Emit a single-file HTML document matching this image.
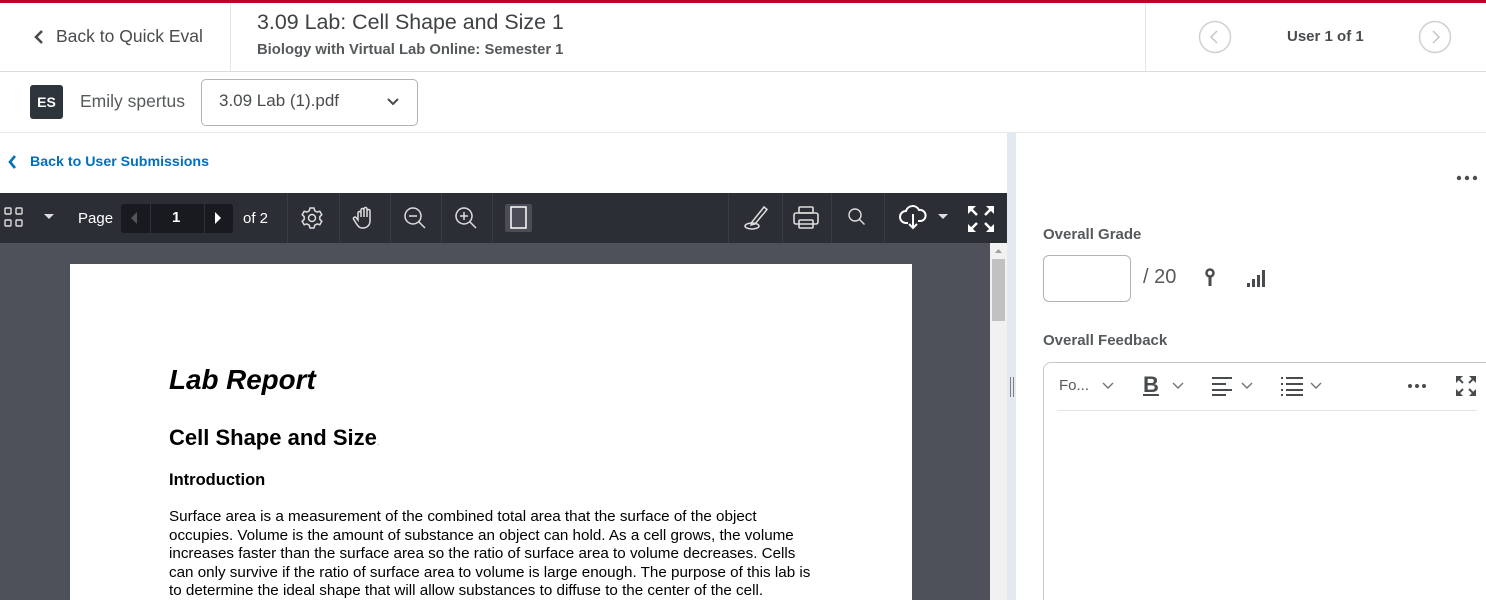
<!DOCTYPE html>
<html style="overflow:hidden;height:600px"><head><meta charset="utf-8"><style>
*{box-sizing:border-box;margin:0;padding:0}
body{width:1486px;height:600px;overflow:hidden;background:#fff;font-family:"Liberation Sans",sans-serif;color:#494c4e;position:relative}
.a{position:absolute}
svg{position:absolute;overflow:visible}
.pdf p{position:absolute;left:168px;font-family:"Liberation Sans",sans-serif;color:#000}
</style></head><body>
<div class="a" style="left:0;top:0;width:1486px;height:3px;background:#c1002a"></div>
<div class="a" style="left:0;top:71px;width:1486px;height:1px;background:#dcdcdc"></div>
<div class="a" style="left:230px;top:3px;width:1px;height:68px;background:#e6e6e6"></div>
<div class="a" style="left:1145px;top:3px;width:1px;height:68px;background:#e6e6e6"></div>
<svg style="left:33px;top:29px" width="12" height="16"><path d="M9 2L3 8L9 14" stroke="#494c4e" stroke-width="2.6" fill="none"/></svg>
<div class="a" style="left:56px;top:26px;font-size:17.5px">Back to Quick Eval</div>
<div class="a" style="left:257px;top:10px;font-size:21.4px;color:#3f4244">3.09 Lab: Cell Shape and Size 1</div>
<div class="a" style="left:257px;top:42px;font-size:14.8px;font-weight:bold;color:#565a5c">Biology with Virtual Lab Online: Semester 1</div>
<svg style="left:1199px;top:21px" width="32" height="32"><circle cx="16" cy="16" r="15.5" stroke="#cfd1d3" stroke-width="1.5" fill="none"/><path d="M18 10L12 16L18 22" stroke="#c3c5c7" stroke-width="1.5" fill="none"/></svg>
<svg style="left:1419px;top:21px" width="32" height="32"><circle cx="16" cy="16" r="15.5" stroke="#cfd1d3" stroke-width="1.5" fill="none"/><path d="M14 10L20 16L14 22" stroke="#c3c5c7" stroke-width="1.5" fill="none"/></svg>
<div class="a" style="left:1287px;top:28px;font-size:15px;font-weight:bold;color:#494c4e">User 1 of 1</div>

<div class="a" style="left:30px;top:85px;width:33px;height:34px;background:#2e343b;border-radius:3px;color:#fff;font-size:14px;font-weight:bold;text-align:center;line-height:34px">ES</div>
<div class="a" style="left:80px;top:91px;font-size:17.5px;color:#565a5c">Emily spertus</div>
<div class="a" style="left:201px;top:79px;width:217px;height:47px;border:1px solid #b3b3b3;border-radius:5px"></div>
<div class="a" style="left:219px;top:91px;font-size:17px;color:#494c4e">3.09 Lab (1).pdf</div>
<svg style="left:387px;top:98px" width="12" height="8"><path d="M1 1L6 6L11 1" stroke="#494c4e" stroke-width="2" fill="none"/></svg>
<div class="a" style="left:0;top:132px;width:1486px;height:1px;background:#e8e8e8"></div>

<svg style="left:7px;top:154px" width="10" height="16"><path d="M8 2L3 8L8 14" stroke="#006fbf" stroke-width="2.6" fill="none"/></svg>
<div class="a" style="left:30px;top:154px;font-size:14.2px;font-weight:bold;color:#006fbf">Back to User Submissions</div>

<div class="a" style="left:1007px;top:133px;width:9px;height:467px;background:#e3e9f0"></div>
<div class="a" style="left:1010px;top:377px;width:1px;height:20px;background:#7b7f84"></div>
<div class="a" style="left:1013px;top:377px;width:1px;height:20px;background:#7b7f84"></div>

<div class="a" style="left:0;top:193px;width:1007px;height:50px;background:#2b2e35"></div>
<div class="a" style="left:0;top:243px;width:990px;height:357px;background:#4e515a"></div>
<div class="a" style="left:990px;top:243px;width:17px;height:357px;background:#f1f1f1"></div>
<div class="a" style="left:992px;top:259px;width:13px;height:62px;background:#c1c1c1"></div>
<svg style="left:994px;top:248px" width="9" height="6"><path d="M1 5L4.5 1L8 5Z" fill="#a0a0a0"/></svg>

<svg style="left:4px;top:207px" width="22" height="22"><g fill="none" stroke="#ddd" stroke-width="1.4"><rect x="1" y="1" width="6" height="6" rx="1"/><rect x="12" y="1" width="6" height="6" rx="1"/><rect x="1" y="13" width="6" height="6" rx="1"/><rect x="12" y="13" width="6" height="6" rx="1"/></g></svg>
<svg style="left:44px;top:214px" width="10" height="6"><path d="M0 0H10L5 5Z" fill="#ddd"/></svg>
<div class="a" style="left:78px;top:210px;font-size:15px;color:#fff">Page</div>
<div class="a" style="left:121px;top:204px;width:112px;height:29px;background:#181a1f;border-radius:3px"></div>
<div class="a" style="left:150px;top:204px;width:1px;height:29px;background:#2e3138"></div>
<div class="a" style="left:204px;top:204px;width:1px;height:29px;background:#2e3138"></div>
<svg style="left:131px;top:212px" width="6" height="12"><path d="M6 0V12L0 6Z" fill="#555"/></svg>
<svg style="left:215px;top:212px" width="6" height="12"><path d="M0 0V12L6 6Z" fill="#fff"/></svg>
<div class="a" style="left:172px;top:209px;font-size:15px;color:#fff;font-weight:bold">1</div>
<div class="a" style="left:243px;top:210px;font-size:15px;color:#fff">of 2</div>
<div class="a" style="left:287px;top:193px;width:1px;height:50px;background:#3a3d45"></div>
<div class="a" style="left:339px;top:193px;width:1px;height:50px;background:#3a3d45"></div>
<div class="a" style="left:390px;top:193px;width:1px;height:50px;background:#3a3d45"></div>
<div class="a" style="left:441px;top:193px;width:1px;height:50px;background:#3a3d45"></div>
<div class="a" style="left:492px;top:193px;width:1px;height:50px;background:#3a3d45"></div>
<div class="a" style="left:728px;top:193px;width:1px;height:50px;background:#3a3d45"></div>
<div class="a" style="left:782px;top:193px;width:1px;height:50px;background:#3a3d45"></div>
<div class="a" style="left:831px;top:193px;width:1px;height:50px;background:#3a3d45"></div>
<div class="a" style="left:884px;top:193px;width:1px;height:50px;background:#3a3d45"></div>
<svg style="left:300px;top:206px" width="24" height="24"><g fill="none" stroke="#ddd" stroke-width="1.5"><circle cx="12" cy="12" r="3.5"/><path d="M10 2h4l.7 2.7 2.4 1.4 2.7-.8 2 3.4-2 2v2.6l2 2-2 3.4-2.7-.8-2.4 1.4L14 22h-4l-.7-2.7-2.4-1.4-2.7.8-2-3.4 2-2v-2.6l-2-2 2-3.4 2.7.8 2.4-1.4z"/></g></svg>
<svg style="left:351px;top:205px" width="26" height="26"><path d="M7 15V8a1.5 1.5 0 0 1 3 0v4V5a1.5 1.5 0 0 1 3 0v7V4a1.5 1.5 0 0 1 3 0v8V6a1.5 1.5 0 0 1 3 0v10c0 4-3 7-7 7h-1c-3 0-4-2-6-5l-2.5-4a1.5 1.5 0 0 1 2.5-1.5z" fill="none" stroke="#ddd" stroke-width="1.5"/></svg>
<svg style="left:403px;top:206px" width="24" height="24"><g fill="none" stroke="#ddd" stroke-width="1.5"><circle cx="10" cy="10" r="8"/><path d="M16 16l6 6M6 10h8"/></g></svg>
<svg style="left:454px;top:206px" width="24" height="24"><g fill="none" stroke="#ddd" stroke-width="1.5"><circle cx="10" cy="10" r="8"/><path d="M16 16l6 6M6 10h8M10 6v8"/></g></svg>
<div class="a" style="left:505px;top:204px;width:27px;height:28px;background:#4a4d55;border-radius:2px"></div>
<svg style="left:510px;top:206px" width="18" height="24"><rect x="1" y="1" width="15" height="21" fill="none" stroke="#fff" stroke-width="1.5"/></svg>
<svg style="left:743px;top:203px" width="26" height="28"><g fill="none" stroke="#ddd" stroke-width="1.5"><path d="M9 19L21 4l3 2.5L12 21l-4 1z"/><ellipse cx="9" cy="23" rx="7" ry="3"/></g></svg>
<svg style="left:793px;top:206px" width="26" height="24"><g fill="none" stroke="#ddd" stroke-width="1.6"><rect x="6" y="1" width="14" height="6" rx="1"/><rect x="1" y="7" width="24" height="11" rx="2"/><rect x="6" y="14" width="14" height="8" rx="1"/></g></svg>
<svg style="left:847px;top:207px" width="20" height="20"><g fill="none" stroke="#ddd" stroke-width="1.4"><circle cx="8" cy="8" r="6"/><path d="M12.5 12.5l5 5"/></g></svg>
<svg style="left:899px;top:203px" width="30" height="28"><g fill="none" stroke="#fff" stroke-width="2"><path d="M9 20H7a6 6 0 0 1 0-12 7 7 0 0 1 13-1 5.5 5.5 0 0 1 2 11h-3"/><path d="M14 11v14M10 21l4 4 4-4"/></g></svg>
<svg style="left:938px;top:214px" width="10" height="6"><path d="M0 0H10L5 5Z" fill="#ddd"/></svg>
<svg style="left:967px;top:205px" width="28" height="28"><g fill="#fff"><path d="M1 1h8L1 9z"/><path d="M27 1h-8l8 8z"/><path d="M1 27h8L1 19z"/><path d="M27 27h-8l8-8z"/></g><g stroke="#fff" stroke-width="2.5"><path d="M3 3l7 7M25 3l-7 7M3 25l7-7M25 25l-7-7"/></g></svg>

<div class="a pdf" style="left:70px;top:264px;width:842px;height:336px;background:#fff;overflow:hidden">
<p style="left:99px;top:100px;font-size:27.8px;font-weight:bold;font-style:italic">Lab Report</p>
<p style="left:99px;top:161px;font-size:22px;font-weight:bold">Cell Shape and Size<span style="font-size:10px;font-weight:normal;color:#999">.</span></p>
<p style="left:99px;top:207px;font-size:16.5px;font-weight:bold">Introduction</p>
<p style="left:99px;top:244px;font-size:15.2px;line-height:18.5px;width:700px;white-space:nowrap">Surface area is a measurement of the combined total area that the surface of the object<br>occupies. Volume is the amount of substance an object can hold. As a cell grows, the volume<br>increases faster than the surface area so the ratio of surface area to volume decreases. Cells<br>can only survive if the ratio of surface area to volume is large enough. The purpose of this lab is<br>to determine the ideal shape that will allow substances to diffuse to the center of the cell.</p>
</div>

<svg style="left:1456px;top:175px" width="22" height="6"><g fill="#494c4e"><circle cx="3" cy="3" r="2.2"/><circle cx="11" cy="3" r="2.2"/><circle cx="19" cy="3" r="2.2"/></g></svg>
<div class="a" style="left:1043px;top:226px;font-size:15px;font-weight:bold;color:#565a5c">Overall Grade</div>
<div class="a" style="left:1043px;top:255px;width:88px;height:47px;border:1px solid #b3b3b3;border-radius:6px"></div>
<div class="a" style="left:1143px;top:266px;font-size:20px;color:#565a5c">/ 20</div>
<svg style="left:1204px;top:268px" width="12" height="20"><circle cx="6" cy="5" r="3.5" fill="none" stroke="#494c4e" stroke-width="2.5"/><path d="M6 8v10" stroke="#494c4e" stroke-width="3"/></svg>
<svg style="left:1246px;top:268px" width="22" height="20"><g fill="#494c4e"><rect x="1" y="15" width="3" height="4"/><rect x="6" y="11" width="3" height="8"/><rect x="11" y="7" width="3" height="12"/><rect x="16" y="2" width="3" height="17"/></g></svg>
<div class="a" style="left:1043px;top:332px;font-size:15px;font-weight:bold;color:#565a5c">Overall Feedback</div>
<div class="a" style="left:1043px;top:362px;width:460px;height:238px;border:1px solid #c8c8c8;border-bottom:none;border-radius:8px 8px 0 0"></div>
<div class="a" style="left:1057px;top:410px;width:420px;height:1px;background:#e3e3e3"></div>
<div class="a" style="left:1059px;top:377px;font-size:15px;color:#565a5c">Fo...</div>
<svg style="left:1102px;top:382px" width="12" height="8"><path d="M1 1L6 6L11 1" stroke="#6e7376" stroke-width="1.4" fill="none"/></svg>
<div class="a" style="left:1143px;top:372px;font-size:22px;font-weight:bold;color:#494c4e;text-decoration:underline;text-underline-offset:2px">B</div>
<svg style="left:1172px;top:382px" width="12" height="8"><path d="M1 1L6 6L11 1" stroke="#6e7376" stroke-width="1.4" fill="none"/></svg>
<svg style="left:1212px;top:376px" width="22" height="20"><g stroke="#494c4e" stroke-width="2"><path d="M0 2h20M0 8h14M0 14h20M0 19h14"/></g></svg>
<svg style="left:1241px;top:382px" width="12" height="8"><path d="M1 1L6 6L11 1" stroke="#6e7376" stroke-width="1.4" fill="none"/></svg>
<svg style="left:1281px;top:376px" width="22" height="20"><g stroke="#494c4e" stroke-width="2"><path d="M0 2h2M5 2h17M0 8h2M5 8h17M0 14h2M5 14h17M0 19h2M5 19h17"/></g></svg>
<svg style="left:1310px;top:382px" width="12" height="8"><path d="M1 1L6 6L11 1" stroke="#6e7376" stroke-width="1.4" fill="none"/></svg>
<svg style="left:1407px;top:383px" width="22" height="6"><g fill="#494c4e"><circle cx="3" cy="3" r="2"/><circle cx="10" cy="3" r="2"/><circle cx="17" cy="3" r="2"/></g></svg>
<svg style="left:1456px;top:376px" width="20" height="20"><g fill="#494c4e"><path d="M0 0h7L0 7z"/><path d="M20 0h-7l7 7z"/><path d="M0 20h7L0 13z"/><path d="M20 20h-7l7-7z"/></g><g stroke="#494c4e" stroke-width="2"><path d="M2 2l5 5M18 2l-5 5M2 18l5-5M18 18l-5-5"/></g></svg>
</body></html>
